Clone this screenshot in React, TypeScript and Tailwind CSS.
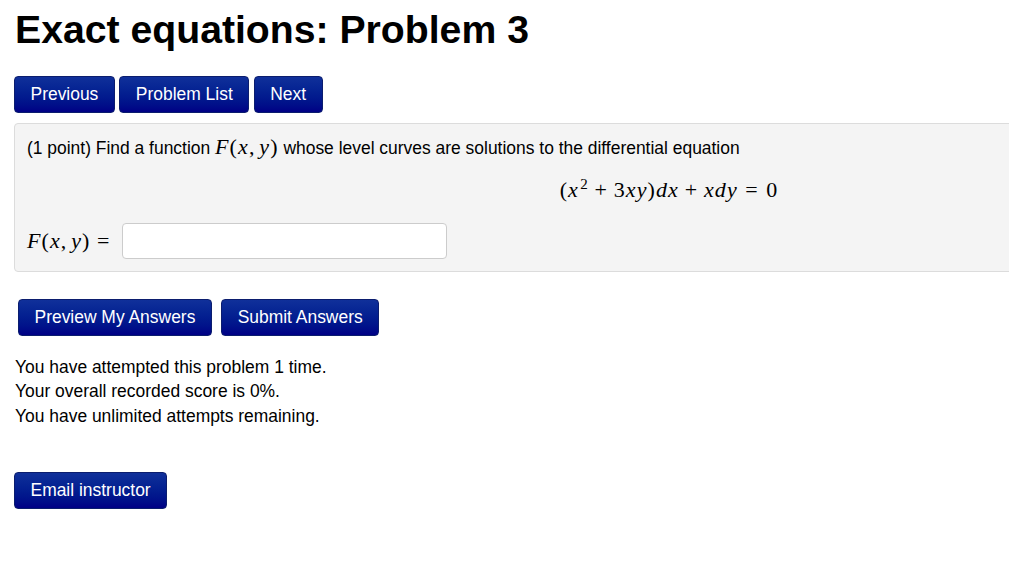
import React from "react";

const S = {
  btn: "inline-block rounded-[4px] border border-[#0b1d6e] bg-gradient-to-b from-[#10309a] to-[#000085] px-[15.5px] text-white leading-[35px] whitespace-nowrap",
  math: "font-['Liberation_Serif',serif] text-[22px] leading-none tracking-[0.05em]",
};

const I = ({ children }: { children: React.ReactNode }) => (
  <span className="italic">{children}</span>
);

const Op = ({ children }: { children: React.ReactNode }) => (
  <span className="mx-[0.26em]">{children}</span>
);

const Fxy = () => (
  <span className={S.math}>
    <I>F</I>(<I>x</I>,<span className="ml-[0.17em]" />
    <I>y</I>)
  </span>
);

export default function App() {
  return (
    <div className="w-full overflow-hidden bg-white text-black font-['Liberation_Sans',Arial,sans-serif] text-[17.45px]">
      <div className="pl-[14px] pb-[60px]">
        <h1 className="pl-[1px] pt-[7.5px] text-[39.2px] font-bold leading-[44px]">
          Exact equations: Problem 3
        </h1>

        <div className="mt-[24.5px] flex gap-[4.5px]">
          <a href="#" className={S.btn}>Previous</a>
          <a href="#" className={S.btn}>Problem List</a>
          <a href="#" className={S.btn}>Next</a>
        </div>

        <div className="mt-[9.5px] w-[1310px] rounded-[4px] border border-[#dcdcdc] bg-[#f4f4f4] px-[12px] pt-[12.6px] pb-[12.4px]">
          <p className="leading-[24.5px]">
            (1 point) Find a function <Fxy /> whose level curves are solutions to the differential equation
          </p>
          <div className="mt-[16.5px] text-center leading-[28px]">
            <span className={S.math}>
              (<I>x</I>
              <sup className="ml-[0.08em] text-[15px] -top-[0.55em]">2</sup>
              <Op>+</Op>3<I>x</I>
              <I>y</I>)<I>d</I>
              <I>x</I>
              <Op>+</Op>
              <I>x</I>
              <I>d</I>
              <I>y</I>
              <span className="mx-[0.34em]">=</span>0
            </span>
          </div>
          <div className="mt-[18px] flex items-center">
            <span className={S.math}>
              <Fxy />
              <span className="ml-[0.3em]">=</span>
            </span>
            <input
              type="text"
              className="ml-[11px] h-[36px] w-[325px] rounded-[4px] border border-[#cccccc] bg-white px-2 outline-none"
            />
          </div>
        </div>

        <div className="mt-[26.6px] ml-[4px] flex gap-[9.3px]">
          <button className={S.btn}>Preview My Answers</button>
          <button className={S.btn}>Submit Answers</button>
        </div>

        <div className="mt-[18.5px] pl-[1px] leading-[24.7px]">
          <div>You have attempted this problem 1 time.</div>
          <div>Your overall recorded score is 0%.</div>
          <div>You have unlimited attempts remaining.</div>
        </div>

        <div className="mt-[43.5px]">
          <button className={S.btn}>Email instructor</button>
        </div>
      </div>
    </div>
  );
}
